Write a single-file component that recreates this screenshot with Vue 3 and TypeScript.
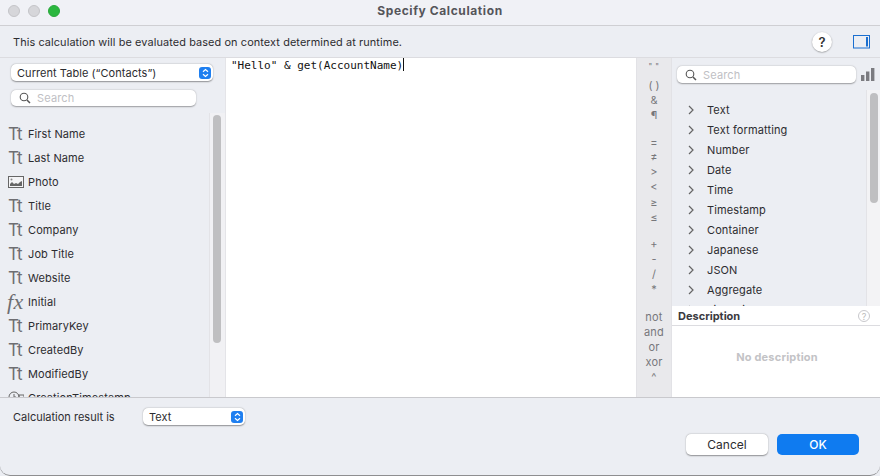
<script setup lang="ts">
type Field = { name: string; kind: 'text' | 'photo' | 'calc' | 'time' }
const fields: Field[] = [
  { name: 'First Name', kind: 'text' },
  { name: 'Last Name', kind: 'text' },
  { name: 'Photo', kind: 'photo' },
  { name: 'Title', kind: 'text' },
  { name: 'Company', kind: 'text' },
  { name: 'Job Title', kind: 'text' },
  { name: 'Website', kind: 'text' },
  { name: 'Initial', kind: 'calc' },
  { name: 'PrimaryKey', kind: 'text' },
  { name: 'CreatedBy', kind: 'text' },
  { name: 'ModifiedBy', kind: 'text' },
  { name: 'CreationTimestamp', kind: 'time' },
]
const categories = ['Text', 'Text formatting', 'Number', 'Date', 'Time', 'Timestamp', 'Container', 'Japanese', 'JSON', 'Aggregate', 'Financial']
const opGroups = [
  ['( )', '&', '¶'],
  ['=', '≠', '>', '<', '≥', '≤'],
  ['+', '-', '/', '*'],
]
const wordOps = ['not', 'and', 'or', 'xor', '^']
</script>

<template>
  <div class="win">
    <header class="titlebar">
      <div class="lights">
        <span class="light"></span>
        <span class="light"></span>
        <span class="light green"></span>
      </div>
      <div class="title">Specify Calculation</div>
    </header>

    <div class="info">
      <span class="info-text">This calculation will be evaluated based on context determined at runtime.</span>
      <span class="help">?</span>
      <svg class="panel-toggle" width="18" height="14" viewBox="0 0 18 14">
        <rect x="0.5" y="0.5" width="16" height="12.5" fill="none" stroke="#1b6fd0" />
        <rect x="13" y="2" width="2" height="9.5" fill="#1b6fd0" />
      </svg>
    </div>

    <main class="main">
      <aside class="left">
        <div class="select table-select">
          <span>Current Table (“Contacts”)</span>
          <span class="stepper">
            <svg width="7" height="10" viewBox="0 0 7 10"><path d="M1 3.8 3.5 1.5 6 3.8M1 6.2 3.5 8.5 6 6.2" fill="none" stroke="#fff" stroke-width="1.2" /></svg>
          </span>
        </div>
        <div class="search left-search">
          <svg width="12" height="12" viewBox="0 0 12 12"><circle cx="5" cy="5" r="3.8" fill="none" stroke="#555" stroke-width="1.1" /><path d="M8 8l3 3" stroke="#555" stroke-width="1.5" /></svg>
          <span>Search</span>
        </div>
        <div class="list-wrap">
          <ul class="fields">
            <li v-for="f in fields" :key="f.name" class="field">
              <span class="ficon">
                <span v-if="f.kind === 'text'" class="tt">Tt</span>
                <span v-else-if="f.kind === 'calc'" class="fx">fx</span>
                <svg v-else-if="f.kind === 'photo'" width="16" height="12" viewBox="0 0 16 12">
                  <rect x="0.5" y="0.5" width="15" height="11" fill="#f4f4f6" stroke="#666" />
                  <path d="M2 10V8l2-2 2 2 2-1 2 1 2-2 2-1v5z" fill="#666" />
                  <circle cx="3.5" cy="3.5" r="1" fill="#888" />
                </svg>
                <svg v-else width="16" height="14" viewBox="0 0 16 14">
                  <circle cx="6" cy="6" r="5" fill="none" stroke="#666" />
                  <path d="M6 3v3h2" fill="none" stroke="#666" />
                  <rect x="11" y="4" width="5" height="7" fill="none" stroke="#666" />
                </svg>
              </span>
              <span>{{ f.name }}</span>
            </li>
          </ul>
          <div class="scrolltrack left-track"><span class="thumb left-thumb"></span></div>
        </div>
      </aside>

      <section class="editor">
        <span class="code">"Hello" &amp; get(AccountName)</span><span class="caret"></span>
      </section>

      <nav class="ops">
        <span class="quotes">" "</span>
        <div v-for="(g, i) in opGroups" :key="i" class="opgroup">
          <span v-for="o in g" :key="o" class="op">{{ o }}</span>
        </div>
        <div class="opgroup words">
          <span v-for="o in wordOps" :key="o" class="word">{{ o }}</span>
        </div>
      </nav>

      <aside class="right">
        <div class="func-top">
          <div class="search right-search">
            <svg width="12" height="12" viewBox="0 0 12 12"><circle cx="5" cy="5" r="3.8" fill="none" stroke="#555" stroke-width="1.1" /><path d="M8 8l3 3" stroke="#555" stroke-width="1.5" /></svg>
            <span>Search</span>
          </div>
          <svg class="bars" width="14" height="14" viewBox="0 0 14 14">
            <rect x="0" y="7" width="3.4" height="6" fill="#7b7b80" />
            <rect x="5" y="3.5" width="3.4" height="9.5" fill="#7b7b80" />
            <rect x="10" y="0" width="3.4" height="13" fill="#7b7b80" />
          </svg>
        </div>
        <div class="func-body">
          <ul class="cats">
            <li v-for="c in categories" :key="c" class="cat">
              <svg width="6" height="10" viewBox="0 0 6 10"><path d="M1 1l4 4-4 4" fill="none" stroke="#666" stroke-width="1.2" /></svg>
              <span>{{ c }}</span>
            </li>
          </ul>
          <div class="scrolltrack right-track"><span class="thumb right-thumb"></span></div>
        </div>
        <div class="desc">
          <div class="desc-head">
            <span>Description</span>
            <span class="desc-help">?</span>
          </div>
          <div class="desc-body">No description</div>
        </div>
      </aside>
    </main>

    <footer class="footer">
      <div class="result">
        <span class="result-label">Calculation result is</span>
        <div class="select result-select">
          <span>Text</span>
          <span class="stepper">
            <svg width="7" height="10" viewBox="0 0 7 10"><path d="M1 3.8 3.5 1.5 6 3.8M1 6.2 3.5 8.5 6 6.2" fill="none" stroke="#fff" stroke-width="1.2" /></svg>
          </span>
        </div>
      </div>
      <div class="actions">
        <button class="btn">Cancel</button>
        <button class="btn primary">OK</button>
      </div>
    </footer>
  </div>
</template>

<style>
html, body { margin: 0; background: #eceef3; }
</style>

<style scoped>
* { box-sizing: border-box; }
.win {
  width: 880px;
  height: 476px;
  display: flex;
  flex-direction: column;
  overflow: hidden;
  background: #eceef3;
  color: #2c2c30;
  font-family: Inter, "Liberation Sans", sans-serif;
  font-size: 11px;
  border-bottom: 1px solid #8e8e90;
  border-bottom-right-radius: 10px;
  border-bottom-left-radius: 10px;
}
.titlebar {
  height: 26px;
  flex: none;
  display: flex;
  align-items: center;
  justify-content: center;
  position: relative;
  background: #f0f1f6;
  border-bottom: 1px solid #cfcfd3;
}
.lights { position: absolute; left: 8px; top: 5px; display: flex; gap: 8px; }
.light { width: 12px; height: 12px; border-radius: 50%; background: #d6d6da; border: 1px solid #c4c4c8; }
.light.green { background: #2bb73f; border-color: #2aa83c; }
.title { font-weight: 700; font-size: 12px; color: #55555a; letter-spacing: 0.6px; margin-top: -5px; }
.info {
  height: 32px;
  flex: none;
  display: flex;
  align-items: center;
  padding: 0 9px 0 13px;
  border-bottom: 1px solid #dcdce0;
}
.info-text { flex: 1; font-size: 10.9px; letter-spacing: 0.1px; }
.help {
  width: 20px; height: 20px; border-radius: 50%; background: #fff;
  box-shadow: 0 0.5px 1.5px rgba(0,0,0,.4);
  display: flex; align-items: center; justify-content: center;
  font-size: 13px; font-weight: 600; margin-right: 21px; color: #333;
}
.panel-toggle { display: block; }
.main { height: 340px; flex: none; display: flex; border-bottom: 1px solid #c9c9cd; }
.left { width: 226px; flex: none; display: flex; flex-direction: column; padding-top: 6px; border-right: 1px solid #e4e4e8; overflow: hidden; }
.select {
  display: flex; align-items: center; justify-content: space-between;
  background: #fff; border-radius: 5px; height: 17px;
  box-shadow: 0 0.5px 1.5px rgba(0,0,0,.4);
  padding: 0 1px 0 6px;
  letter-spacing: 0.05px;
}
.table-select { width: 202px; margin-left: 11px; flex: none; }
.stepper {
  width: 12px; height: 12px; border-radius: 3px; background: #1f7ff0;
  display: flex; align-items: center; justify-content: center; margin-right: 1px;
}
.search {
  display: flex; align-items: center; gap: 6px; height: 17px;
  background: #fff; border-radius: 5px; color: #c0c0c4;
  box-shadow: 0 0.5px 1.5px rgba(0,0,0,.35);
  padding-left: 8px; letter-spacing: 0.15px;
}
.left-search { width: 185px; height: 16px; margin: 9px 0 0 11px; flex: none; }
.list-wrap { flex: 1; min-height: 0; display: flex; margin-top: 7px; overflow: hidden; }
.fields { list-style: none; margin: 0; padding: 9px 0 0 8px; flex: 1; overflow: hidden; }
.field { height: 24px; display: flex; align-items: center; letter-spacing: 0.1px; }
.ficon { width: 20px; display: flex; align-items: center; flex: none; color: #6e6e72; }
.tt { font-family: Inter, sans-serif; font-size: 17px; line-height: 1; letter-spacing: -0.3px; }
.fx { font-family: "Liberation Serif", serif; font-style: italic; font-size: 22px; line-height: 1; letter-spacing: 0.5px; margin-left: -1px; }
.scrolltrack { flex: none; background: #f1f1f4; border-left: 1px solid #e3e3e7; }
.thumb { display: block; background: #bfbfc1; border-radius: 4px; }
.left-track { width: 16px; padding: 2px 4px 0 3px; }
.left-thumb { width: 8px; height: 228px; }
.editor { width: 411px; flex: none; background: #fff; padding: 0 5px; line-height: 15px; border-right: 1px solid #e2e2e6; }
.code { font-family: "DejaVu Sans Mono", monospace; font-size: 11px; color: #111; }
.caret { display: inline-block; width: 1px; height: 13px; background: #111; vertical-align: -2px; }
.ops {
  width: 35px; flex: none; display: flex; flex-direction: column; align-items: center;
  padding-top: 3px; color: #77777b; border-right: 1px solid #e2e2e6; background: #e9e9ec;
}
.quotes { height: 10px; line-height: 10px; font-size: 8px; letter-spacing: 0.5px; margin-bottom: 7px; }
.opgroup { display: flex; flex-direction: column; align-items: center; margin-bottom: 12px; }
.op { height: 15px; line-height: 15px; font-size: 11px; }
.opgroup.words { margin-top: 1px; margin-bottom: 0; }
.word { height: 15px; line-height: 15px; font-size: 11px; letter-spacing: 0.2px; }
.right { flex: 1; min-width: 0; display: flex; flex-direction: column; }
.func-top { height: 32px; flex: none; display: flex; align-items: center; padding: 1px 5px 0 5px; gap: 5px; }
.right-search { flex: 1; height: 17px; }
.bars { display: block; }
.func-body { height: 216px; flex: none; display: flex; overflow: hidden; }
.cats { list-style: none; margin: 0; padding: 10px 0 0 16px; flex: 1; overflow: hidden; }
.cat { height: 20px; display: flex; align-items: center; gap: 13px; letter-spacing: 0.12px; }
.right-track { width: 14px; padding-left: 3px; background: #f3f3f5; }
.right-thumb { width: 8px; height: 110px; margin-top: 3px; }
.desc { flex: 1; min-height: 0; background: #fff; display: flex; flex-direction: column; }
.desc-head {
  height: 20px; flex: none; display: flex; align-items: center; justify-content: space-between;
  padding: 1px 10px 0 6px; border-bottom: 1px solid #dcdce0; font-weight: 700; color: #3a3a3e;
}
.desc-help {
  width: 12px; height: 12px; border: 1px solid #c8c8cc; border-radius: 50%;
  color: #bbb; font-size: 9px; font-weight: 400; display: flex; align-items: center; justify-content: center;
}
.desc-body { flex: 1; display: flex; align-items: center; justify-content: center; color: #c3c3c6; font-weight: 700; padding: 0 0 9px 2px; letter-spacing: 0.2px; }
.footer { flex: 1; min-height: 0; display: flex; flex-direction: column; }
.result { display: flex; align-items: center; padding: 10px 0 0 13px; }
.result-label { width: 130px; }
.result-select { width: 102px; }
.actions { display: flex; justify-content: flex-end; gap: 9px; padding: 9px 21px 0 0; }
.btn {
  width: 82px; height: 21px; border: 0; border-radius: 5px; background: #fff;
  box-shadow: 0 0.5px 1.5px rgba(0,0,0,.4);
  font: inherit; font-size: 12px; color: #2c2c30; padding: 0;
}
.btn.primary { background: #0f7bf0; color: #fff; font-weight: 500; box-shadow: none; }
</style>
